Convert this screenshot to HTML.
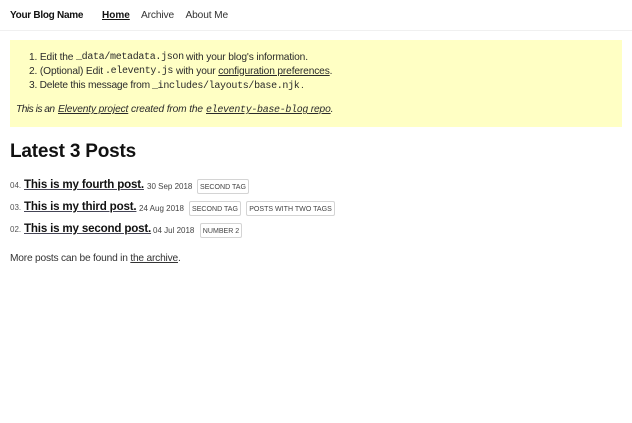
<!DOCTYPE html>
<html lang="en">
<head>
<meta charset="utf-8">
<title>Your Blog Name</title>
<style>
html,body{margin:0;padding:0;background:#fff}
body{width:632px;height:423px;position:relative;overflow:hidden;font-family:"Liberation Sans",sans-serif;color:#2a2a2a;font-size:10.2px;letter-spacing:-.14px}
#w{position:absolute;left:0;top:0;width:632px;height:423px;filter:blur(.3px)}
.t{position:absolute;white-space:nowrap;line-height:14px}
.m{font-family:"Liberation Mono",monospace;font-size:10px;letter-spacing:-.33px}
u{text-decoration-thickness:1px;text-underline-offset:1px}
.b{position:absolute}
.tag{position:absolute;height:13px;line-height:15px;border:1px solid #d4d4d4;border-radius:2px;font-size:7.05px;letter-spacing:0;color:#444;text-align:center;white-space:nowrap;background:#fff}
.h{font-weight:bold;font-size:11.6px;letter-spacing:-.19px;color:#111}
.h u{text-decoration-color:#445}
.n{font-size:8px;letter-spacing:0;color:#555}
.d{font-size:8px;letter-spacing:0;color:#444}
</style>
</head>
<body>
<div id="w">
<div class="b" style="left:0;top:30px;width:632px;height:1px;background:#f0f0f0"></div>
<div class="t" style="left:10px;top:8.5px;font-weight:bold;font-size:10px;letter-spacing:-.28px;color:#111">Your Blog Name</div>
<div class="t" style="left:102px;top:8.5px;font-weight:bold;font-size:10px;letter-spacing:0;color:#111"><u>Home</u></div>
<div class="t" style="left:141px;top:8.5px;color:#333">Archive</div>
<div class="t" style="left:185.5px;top:8.5px;color:#333">About Me</div>

<div class="b" style="left:10px;top:40px;width:612px;height:87px;background:#ffffc4"></div>
<div class="t" style="left:29px;top:50.5px">1. Edit the</div>
<div class="t m" style="left:76px;top:51px">_data/metadata.json</div>
<div class="t" style="left:186px;top:50.5px">with your blog's information.</div>
<div class="t" style="left:29px;top:64.5px">2. (Optional) Edit</div>
<div class="t m" style="left:105px;top:65px">.eleventy.js</div>
<div class="t" style="left:176px;top:64.5px">with your <u>configuration preferences</u>.</div>
<div class="t" style="left:29px;top:79px;letter-spacing:-.22px">3. Delete this message from</div>
<div class="t m" style="left:152px;top:79.5px">_includes/layouts/base.njk</div>
<div class="t" style="left:301px;top:79px">.</div>
<div class="t" style="left:16px;top:103px;font-style:italic;letter-spacing:-.5px">This is an</div>
<div class="t" style="left:58px;top:103px;font-style:italic"><u>Eleventy project</u></div>
<div class="t" style="left:131px;top:103px;font-style:italic">created from the</div>
<div class="t" style="left:206px;top:103px;font-style:italic"><u><span class="m">eleventy-base-blog</span> repo</u>.</div>

<div class="t" style="left:10px;top:141px;font-size:19px;line-height:22px;letter-spacing:-.2px;font-weight:bold;color:#111">Latest 3 Posts</div>

<div class="t n" style="left:10px;top:179px">04.</div>
<div class="t h" style="left:24px;top:178px"><u>This is my fourth post.</u></div>
<div class="t d" style="left:147px;top:179.5px">30 Sep 2018</div>
<div class="tag" style="left:197px;top:178.5px;width:50px">SECOND TAG</div>

<div class="t n" style="left:10px;top:201px">03.</div>
<div class="t h" style="left:24px;top:200px"><u>This is my third post.</u></div>
<div class="t d" style="left:139px;top:201.5px">24 Aug 2018</div>
<div class="tag" style="left:189px;top:201px;width:50px">SECOND TAG</div>
<div class="tag" style="left:246px;top:201px;width:87px">POSTS WITH TWO TAGS</div>

<div class="t n" style="left:10px;top:223px">02.</div>
<div class="t h" style="left:24px;top:222px"><u>This is my second post.</u></div>
<div class="t d" style="left:153px;top:223.5px">04 Jul 2018</div>
<div class="tag" style="left:200px;top:223px;width:40px">NUMBER 2</div>

<div class="t" style="left:10px;top:251.5px;color:#333;letter-spacing:-.2px">More posts can be found in <u>the archive</u>.</div>
</div>
</body>
</html>
